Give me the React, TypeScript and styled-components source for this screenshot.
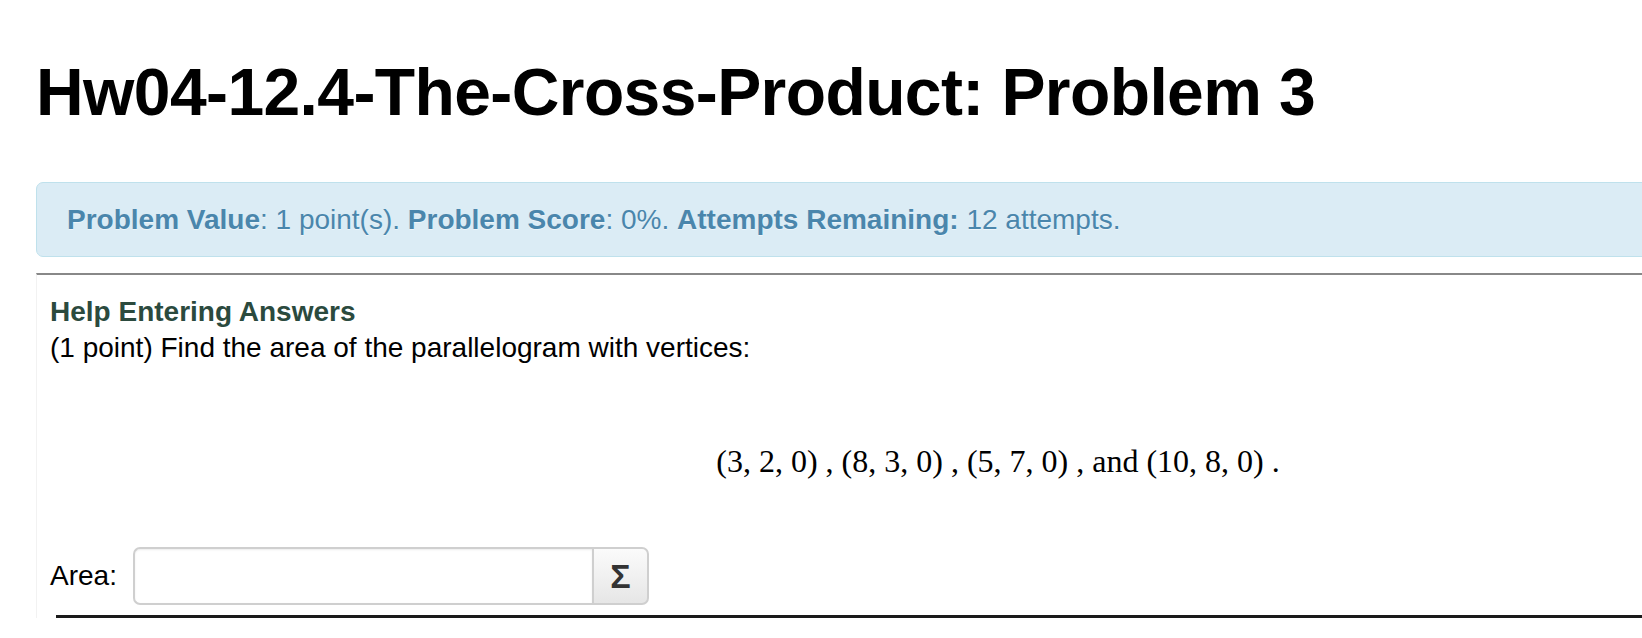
import React from 'react';
import styled, { createGlobalStyle } from 'styled-components';

const GlobalStyle = createGlobalStyle`
  html, body {
    margin: 0;
    padding: 0;
    background: #fff;
    overflow: hidden;
  }
  body {
    font-family: "Liberation Sans", Arial, Helvetica, sans-serif;
    color: #000;
  }
`;

const Page = styled.div`
  width: 2000px;
  padding: 0 0 40px 36px;
`;

const Title = styled.h1`
  margin: 0;
  padding: 52px 0 0 0;
  font-size: 66px;
  line-height: 80px;
  font-weight: 700;
  letter-spacing: -0.6px;
`;

const InfoAlert = styled.div`
  margin-top: 50px;
  padding: 0 30px;
  height: 73px;
  display: flex;
  align-items: center;
  background: #dbecf5;
  border: 1px solid #bfe1ec;
  border-radius: 7px;
  color: #4a86ac;
  font-size: 28px;
  text-shadow: 0 1px 0 rgba(255, 255, 255, 0.5);
`;

const Label = styled.b`
  font-weight: 700;
`;

const ProblemBody = styled.div`
  margin-top: 16px;
  border-top: 2px solid #888;
  border-left: 1px solid #f2f2f2;
  padding: 19px 0 0 13px;
`;

const HelpLink = styled.div`
  color: #2b4a3e;
  font-size: 28px;
  font-weight: 700;
  line-height: 36px;
`;

const Prompt = styled.div`
  font-size: 28px;
  line-height: 36px;
`;

const MathLine = styled.div`
  margin-top: 75px;
  width: 1896px;
  text-align: center;
  font-family: "Liberation Serif", "Times New Roman", serif;
  font-size: 32px;
  line-height: 40px;
`;

const AnswerRow = styled.div`
  margin-top: 66px;
  display: flex;
  align-items: center;
  gap: 16px;
  font-size: 28px;
`;

const InputGroup = styled.div`
  display: flex;
  height: 58px;
`;

const AnswerInput = styled.input`
  box-sizing: border-box;
  width: 459px;
  height: 58px;
  border: 2px solid #cfcfcf;
  border-right: none;
  border-radius: 7px 0 0 7px;
  box-shadow: inset 0 1px 2px rgba(0, 0, 0, 0.08);
  font-size: 28px;
  padding: 0 10px;
  outline: none;
`;

const SigmaButton = styled.button`
  box-sizing: border-box;
  width: 57px;
  height: 58px;
  border: 2px solid #cfcfcf;
  border-radius: 0 7px 7px 0;
  background: linear-gradient(#fbfbfb, #e6e6e6);
  color: #333;
  font-family: "Liberation Sans", Arial, sans-serif;
  font-size: 34px;
  font-weight: 700;
  padding: 0;
  display: flex;
  align-items: center;
  justify-content: center;
`;

const BottomRule = styled.hr`
  margin: 10px 0 0 6px;
  border: none;
  border-top: 3px solid #1a1a1a;
`;

export default function App() {
  return (
    <>
      <GlobalStyle />
      <Page>
        <Title>Hw04-12.4-The-Cross-Product: Problem 3</Title>
        <InfoAlert>
          <span>
            <Label>Problem Value</Label>: 1 point(s). <Label>Problem Score</Label>: 0%.{' '}
            <Label>Attempts Remaining:</Label> 12 attempts.
          </span>
        </InfoAlert>
        <ProblemBody>
          <HelpLink>Help Entering Answers</HelpLink>
          <Prompt>(1 point) Find the area of the parallelogram with vertices:</Prompt>
          <MathLine>(3, 2, 0) , (8, 3, 0) , (5, 7, 0) , and (10, 8, 0) .</MathLine>
          <AnswerRow>
            <span>Area:</span>
            <InputGroup>
              <AnswerInput type="text" />
              <SigmaButton>Σ</SigmaButton>
            </InputGroup>
          </AnswerRow>
          <BottomRule />
        </ProblemBody>
      </Page>
    </>
  );
}
